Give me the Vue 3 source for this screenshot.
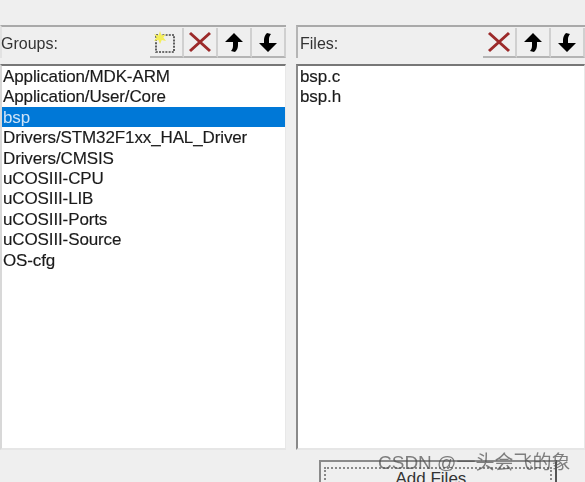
<script setup>
const groups = ['Application/MDK-ARM','Application/User/Core','bsp','Drivers/STM32F1xx_HAL_Driver','Drivers/CMSIS','uCOSIII-CPU','uCOSIII-LIB','uCOSIII-Ports','uCOSIII-Source','OS-cfg']
const files = ['bsp.c','bsp.h']
</script>

<template>
  <div class="page">
    <div class="blurred">
      <div class="panels">
        <section class="panel">
          <header class="head">
            <span class="title">Groups:</span>
            <div class="tools">
              <button class="tool">
                <svg viewBox="0 0 24 24" width="24" height="24">
                  <rect x="2" y="5" width="18" height="17" fill="none" stroke="#444" stroke-width="1.7" stroke-dasharray="2 1.2"/>
                  <path d="M6 1l1.6 4.4L12 4 9.4 7.6 12 11 7.8 10 6 14 4.4 10 0 11l2.6-3.4L0 4l4.4 1.4z" fill="#f4ee5a"/>
                </svg>
              </button>
              <button class="tool">
                <svg viewBox="0 0 24 24" width="24" height="24"><path d="M2 3l20 18M22 3L2 21" stroke="#9c2a2a" stroke-width="3" fill="none"/></svg>
              </button>
              <button class="tool">
                <svg viewBox="0 0 24 24" width="24" height="24"><path d="M12 3l9 9h-5v3c0 3-1 5-3 7l-4-1c1-1 2-3 2-5v-4H3z" fill="#000"/></svg>
              </button>
              <button class="tool">
                <svg viewBox="0 0 24 24" width="24" height="24"><path d="M12 22l-9-9h5v-3c0-3 1-5 3-7l4 1c-1 1-2 3-2 5v4h8z" fill="#000"/></svg>
              </button>
            </div>
          </header>
          <ul class="list">
            <li v-for="g in groups" :key="g" :class="{ sel: g === 'bsp' }">{{ g }}</li>
          </ul>
        </section>
        <section class="panel">
          <header class="head">
            <span class="title">Files:</span>
            <div class="tools">
              <button class="tool">
                <svg viewBox="0 0 24 24" width="24" height="24"><path d="M2 3l20 18M22 3L2 21" stroke="#9c2a2a" stroke-width="3" fill="none"/></svg>
              </button>
              <button class="tool">
                <svg viewBox="0 0 24 24" width="24" height="24"><path d="M12 3l9 9h-5v3c0 3-1 5-3 7l-4-1c1-1 2-3 2-5v-4H3z" fill="#000"/></svg>
              </button>
              <button class="tool">
                <svg viewBox="0 0 24 24" width="24" height="24"><path d="M12 22l-9-9h5v-3c0-3 1-5 3-7l4 1c-1 1-2 3-2 5v4h8z" fill="#000"/></svg>
              </button>
            </div>
          </header>
          <ul class="list">
            <li v-for="f in files" :key="f">{{ f }}</li>
          </ul>
        </section>
      </div>
      <div class="actions">
        <button class="add"><span class="focus">Add Files...</span></button>
      </div>
    </div>
    <div class="mark">CSDN @一头会飞的象</div>
  </div>
</template>

<style scoped>
.page {
  position: relative;
  width: 585px;
  height: 482px;
  overflow: hidden;
  background: #efefef;
  font-family: "Liberation Sans", "Noto Sans CJK SC", sans-serif;
  color: #222;
}
.blurred { filter: blur(0.6px); padding-top: 25px; }
.panels {
  display: grid;
  grid-template-columns: 286px 289px;
  gap: 10px;
}
.panel { display: flex; flex-direction: column; }
.head {
  height: 31px;
  display: flex;
  align-items: center;
  justify-content: space-between;
  border-top: 2px solid #a9a9a9;
  border-left: 2px solid #e2e2e2;
  margin-bottom: 6px;
  box-sizing: content-box;
}
.panel:last-child .head { border-left-color: #b5b5b5; padding-left: 2px; }
.title { font-size: 16px; color: #333; padding-top: 3px; margin-left: -1px; }
.panel:last-child .title { margin-left: 0; }
.tools { display: flex; }
.tool {
  width: 34px;
  height: 30px;
  padding: 0;
  display: flex;
  align-items: center;
  justify-content: center;
  background: #efefef;
  border: 0;
  border-right: 2px solid #d0d0d0;
  border-bottom: 2px solid #b4b4b4;
}
.list {
  list-style: none;
  margin: 0;
  height: 386px;
  padding: 0;
  background: #fff;
  border-top: 2px solid #777;
  border-left: 2px solid #8a8a8a;
  border-right: 1px solid #e8e8e8;
  border-bottom: 2px solid #e6e6e6;
  box-sizing: border-box;
  overflow: hidden;
}
.panel:first-child .list { border-left-color: #d8d8d8; }
.list li {
  height: 20.4px;
  line-height: 22px;
  font-size: 17px;
  letter-spacing: -0.12px;
  padding-left: 1px;
  color: #1a1a1a;
  -webkit-text-stroke: 0.15px #1a1a1a;
  white-space: nowrap;
}
.panel:last-child .list li { padding-left: 2px; }
.list li.sel { background: #0078d7; color: #cfe4f7; -webkit-text-stroke: 0; }
.actions {
  display: flex;
  justify-content: flex-end;
  padding: 10px 28px 0 0;
}
.add {
  width: 238px;
  height: 40px;
  padding: 5px 3px 3px;
  background: #efefef;
  border: 2px solid #8a8a8a;
  border-right-color: #555;
  font: inherit;
  flex: none;
}
.focus {
  display: block;
  height: 100%;
  border: 2px dotted #888;
  font-size: 17px;
  color: #333;
  text-align: center;
  line-height: 20px;
  margin: 0;
}
.mark {
  position: absolute;
  left: 378px;
  top: 452px;
  font-size: 19px;
  line-height: 22px;
  color: rgba(80, 80, 80, 0.72);
  white-space: nowrap;
}
</style>
